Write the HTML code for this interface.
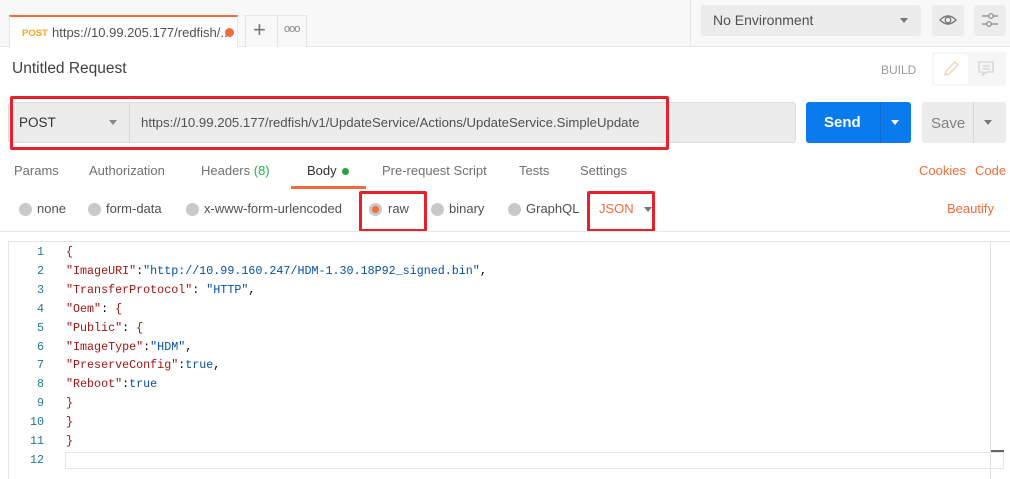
<!DOCTYPE html>
<html><head><meta charset="utf-8"><style>
*{box-sizing:border-box;margin:0;padding:0}
body{width:1010px;height:479px;position:relative;background:#fff;font-family:"Liberation Sans",sans-serif;color:#505050;overflow:hidden;font-size:13px}
.a{position:absolute}
.code{font-family:"Liberation Mono",monospace;font-size:11.7px;line-height:18.9px}
.rb{border:3.5px solid #e8202a;border-radius:2px}
.rad{width:13px;height:13px;border-radius:50%;background:#c9c9c9}
</style></head><body>
<div class="a" style="left:0;top:0;width:1010px;height:47px;background:#f8f8f8;border-bottom:1px solid #e6e6e6"></div>
<div class="a" style="left:9px;top:15px;width:229px;height:33px;background:#fff;border-top:2px solid #f26b3a;border-left:1px solid #e6e6e6;border-right:1px solid #e6e6e6"></div>
<div class="a" style="left:22px;top:28px;font-size:9.5px;font-weight:bold;color:#f5a623">POST</div>
<div class="a" style="left:52px;top:25px;font-size:13px;color:#505050">https://10.99.205.177/redfish/...</div>
<div class="a" style="left:225px;top:28px;width:9px;height:9px;border-radius:50%;background:#f26b3a"></div>
<div class="a" style="left:245px;top:15px;width:62px;height:32px;border:1px solid #e6e6e6;border-bottom:none;background:#f8f8f8"></div>
<div class="a" style="left:277px;top:15px;width:1px;height:32px;background:#e6e6e6"></div>
<div class="a" style="left:253px;top:17px;font-size:22px;color:#777;font-weight:300">+</div>
<div class="a" style="left:284px;top:23px;font-size:11px;color:#888;letter-spacing:-1px">ooo</div>
<div class="a" style="left:690px;top:0;width:1px;height:47px;background:#e6e6e6"></div>
<div class="a" style="left:701px;top:5px;width:220px;height:31px;background:#ececec;border-radius:3px"></div>
<div class="a" style="left:713px;top:12px;font-size:14px;color:#505050">No Environment</div>
<div class="a" style="left:900px;top:18px;border-left:4px solid transparent;border-right:4px solid transparent;border-top:5px solid #777"></div>
<div class="a" style="left:932px;top:5px;width:32px;height:31px;background:#ececec;border-radius:3px"></div>
<svg class="a" style="left:938px;top:12px" width="20" height="16"><path d="M2 8 Q10 0 18 8 Q10 16 2 8Z" fill="none" stroke="#777" stroke-width="1.3"/><circle cx="10" cy="8" r="2.8" fill="none" stroke="#777" stroke-width="1.3"/></svg>
<div class="a" style="left:974px;top:5px;width:32px;height:31px;background:#ececec;border-radius:3px"></div>
<svg class="a" style="left:981px;top:10px" width="18" height="20"><path d="M1 6H17M1 14H17" stroke="#888" stroke-width="1.2"/><circle cx="10" cy="6" r="2.3" fill="#ececec" stroke="#888" stroke-width="1.2"/><circle cx="8" cy="14" r="2.3" fill="#ececec" stroke="#888" stroke-width="1.2"/></svg>
<div class="a" style="left:12px;top:60px;font-size:15.5px;color:#404040">Untitled Request</div>
<div class="a" style="left:881px;top:63px;font-size:12px;color:#9a9a9a">BUILD</div>
<div class="a" style="left:932px;top:52px;width:74px;height:34px;background:#f6f6f6;border-radius:3px"></div>
<div class="a" style="left:934px;top:54px;width:34px;height:30px;background:#fff;border-radius:3px"></div>
<svg class="a" style="left:942px;top:60px" width="18" height="18"><path d="M3 15L4 11L13 2L16 5L7 14Z" fill="none" stroke="#f6c6b3" stroke-width="1.2"/></svg>
<svg class="a" style="left:977px;top:60px" width="18" height="18"><path d="M2 2H16V12H9L6 15V12H2Z" fill="none" stroke="#ccc" stroke-width="1.1"/><path d="M5 6H13M5 9H13" stroke="#ccc"/></svg>
<div class="a" style="left:8px;top:102px;width:788px;height:41px;background:#ececec;border:1px solid #dcdcdc;border-radius:3px"></div>
<div class="a" style="left:129px;top:103px;width:1px;height:39px;background:#d6d6d6"></div>
<div class="a" style="left:19px;top:115px;font-size:13.5px;color:#333">POST</div>
<div class="a" style="left:109px;top:120px;border-left:4px solid transparent;border-right:4px solid transparent;border-top:5px solid #888"></div>
<div class="a" style="left:141px;top:115px;font-size:13.2px;color:#505050">https://10.99.205.177/redfish/v1/UpdateService/Actions/UpdateService.SimpleUpdate</div>
<div class="a rb" style="left:10px;top:96px;width:659px;height:54px"></div>
<div class="a" style="left:806px;top:102px;width:105px;height:41px;background:#097bed;border-radius:3px"></div>
<div class="a" style="left:880px;top:102px;width:1px;height:41px;background:#0a6bd0"></div>
<div class="a" style="left:824px;top:114px;font-size:15px;font-weight:bold;color:#fff">Send</div>
<div class="a" style="left:891px;top:120px;border-left:4px solid transparent;border-right:4px solid transparent;border-top:5px solid #fff"></div>
<div class="a" style="left:922px;top:102px;width:84px;height:41px;background:#ececec;border-radius:3px"></div>
<div class="a" style="left:973px;top:102px;width:1px;height:41px;background:#d8d8d8"></div>
<div class="a" style="left:931px;top:115px;font-size:15px;color:#808080">Save</div>
<div class="a" style="left:984px;top:120px;border-left:4px solid transparent;border-right:4px solid transparent;border-top:5px solid #777"></div>
<div class="a" style="top:163px;left:14px;font-size:13px;color:#707070">Params</div>
<div class="a" style="top:163px;left:89px;font-size:13px;color:#707070">Authorization</div>
<div class="a" style="top:163px;left:201px;font-size:13px;color:#707070">Headers <span style="color:#26b34a">(8)</span></div>
<div class="a" style="top:163px;left:307px;font-size:13px;color:#333">Body</div>
<div class="a" style="top:168px;left:342px;width:7px;height:7px;border-radius:50%;background:#26a040"></div>
<div class="a" style="left:291px;top:186px;width:75px;height:3px;background:#f26b3a"></div>
<div class="a" style="top:163px;left:382px;font-size:13px;color:#707070">Pre-request Script</div>
<div class="a" style="top:163px;left:519px;font-size:13px;color:#707070">Tests</div>
<div class="a" style="top:163px;left:580px;font-size:13px;color:#707070">Settings</div>
<div class="a" style="top:163px;left:919px;font-size:13px;color:#f26b3a">Cookies</div>
<div class="a" style="top:163px;left:975px;font-size:13px;color:#f26b3a">Code</div>
<div class="a rad" style="left:19px;top:203px"></div><div class="a" style="top:201px;left:37px;color:#505050">none</div>
<div class="a rad" style="left:88px;top:203px"></div><div class="a" style="top:201px;left:106px;color:#505050">form-data</div>
<div class="a rad" style="left:186px;top:203px"></div><div class="a" style="top:201px;left:204px;color:#505050">x-www-form-urlencoded</div>
<div class="a rad" style="left:369px;top:203px;background:#c9c9c9"></div><div class="a" style="left:372px;top:206px;width:7px;height:7px;border-radius:50%;background:#f26b3a"></div><div class="a" style="top:201px;left:388px;color:#505050">raw</div>
<div class="a rad" style="left:431px;top:203px"></div><div class="a" style="top:201px;left:449px;color:#505050">binary</div>
<div class="a rad" style="left:508px;top:203px"></div><div class="a" style="top:201px;left:526px;color:#505050">GraphQL</div>
<div class="a" style="top:201px;left:599px;color:#f26b3a">JSON</div>
<div class="a" style="left:644px;top:207px;border-left:4px solid transparent;border-right:4px solid transparent;border-top:5px solid #777"></div>
<div class="a" style="top:201px;left:947px;color:#f26b3a">Beautify</div>
<div class="a rb" style="left:359px;top:191px;width:68px;height:41px"></div>
<div class="a rb" style="left:587px;top:191px;width:68px;height:41px"></div>
<div class="a" style="left:0;top:231px;width:1010px;height:1px;background:#e6e6e6"></div>
<div class="a" style="left:8px;top:241px;width:1002px;height:1px;background:#e6e6e6"></div>
<div class="a" style="left:8px;top:241px;width:1px;height:238px;background:#e6e6e6"></div>
<div class="a" style="left:990px;top:241px;width:1px;height:238px;background:#e0e0e0"></div>
<div class="a" style="left:991px;top:450px;width:13px;height:2px;background:#666"></div>
<div class="a" style="left:65px;top:452px;width:939px;height:17px;border:1px solid #e6e6e6"></div>
<div class="a code" style="left:14px;top:243px;width:30px;text-align:right;color:#237893">1<br>2<br>3<br>4<br>5<br>6<br>7<br>8<br>9<br>10<br>11<br>12</div>
<div class="a code" style="left:66px;top:243px;color:#000;white-space:pre"><span style="color:#a31515">{</span>
<span style="color:#a31515">"ImageURI"</span>:<span style="color:#0451a5">"http://10.99.160.247/HDM-1.30.18P92_signed.bin"</span>,
<span style="color:#a31515">"TransferProtocol"</span>: <span style="color:#0451a5">"HTTP"</span>,
<span style="color:#a31515">"Oem"</span>: <span style="color:#a31515">{</span>
<span style="color:#a31515">"Public"</span>: <span style="color:#a31515">{</span>
<span style="color:#a31515">"ImageType"</span>:<span style="color:#0451a5">"HDM"</span>,
<span style="color:#a31515">"PreserveConfig"</span>:<span style="color:#0451a5">true</span>,
<span style="color:#a31515">"Reboot"</span>:<span style="color:#0451a5">true</span>
<span style="color:#a31515">}</span>
<span style="color:#a31515">}</span>
<span style="color:#a31515">}</span>
</div>
</body></html>
